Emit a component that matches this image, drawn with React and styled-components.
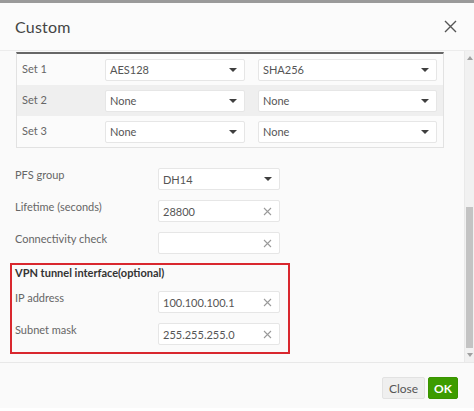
import React from "react";
import styled, { createGlobalStyle } from "styled-components";

const Global = createGlobalStyle`
  html, body { margin: 0; padding: 0; background: #ffffff; }
  body { font-family: Lato, "Noto Sans", "Liberation Sans", sans-serif; }
  * { box-sizing: border-box; }
`;

const Dialog = styled.div`
  width: 474px;
  height: 408px;
  background: #fafafa;
  border-top: 3px solid #9a9a9a;
  display: flex;
  flex-direction: column;
  overflow: hidden;
`;

const Header = styled.div`
  height: 48px;
  flex: none;
  display: flex;
  align-items: center;
  justify-content: space-between;
  padding: 0 17px 0 15px;
  background: #fbfbfb;
  border-bottom: 1px solid #ececec;
`;

const Title = styled.div`
  font-size: 16px;
  color: #444;
  letter-spacing: 0.2px;
  padding-bottom: 1px;
`;

const IconButton = styled.div`
  width: 14px;
  height: 14px;
  display: flex;
  align-items: center;
  justify-content: center;
`;

const Body = styled.div`
  flex: 1;
  display: flex;
  min-height: 0;
`;

const Content = styled.div`
  flex: 1;
  overflow: hidden;
  padding: 1px 20px 0 15px;
  display: flex;
  flex-direction: column;
`;

const Scrollbar = styled.div`
  width: 10px;
  flex: none;
  background: #f1f1f1;
  border-left: 1px solid #e9e9e9;
  display: flex;
  flex-direction: column;
`;

const ScrollArrow = styled.div`
  height: 14px;
  flex: none;
  display: flex;
  align-items: center;
  justify-content: center;
`;

const ScrollTrack = styled.div`
  flex: 1;
  display: flex;
  flex-direction: column;
  justify-content: flex-end;
  padding: 0 1px;
`;

const Thumb = styled.div`
  height: 141px;
  background: #c3c3c3;
`;

const Table = styled.div`
  margin-left: 1px;
  width: 428px;
  border-top: 2px solid #676767;
  border-left: 1px solid #e2e2e2;
  border-right: 1px solid #e2e2e2;
  border-bottom: 1px solid #e2e2e2;
  background: #fbfbfb;
`;

const TableRow = styled.div`
  height: 31px;
  display: grid;
  grid-template-columns: 70px 140px 179px;
  column-gap: 13px;
  align-items: center;
  padding: 0 6px 0 5px;
  background: ${(p) => (p.$shaded ? "#efefef" : "transparent")};
`;

const CellLabel = styled.div`
  font-size: 11px;
  color: #666;
  padding-bottom: 2px;
`;

const Field = styled.div`
  height: 22px;
  width: ${(p) => p.$w || "100%"};
  background: #ffffff;
  border: 1px solid #e6e6e6;
  border-radius: 2px;
  display: flex;
  align-items: center;
  justify-content: space-between;
  padding: 0 7px 0 4px;
  font-size: 11px;
  color: #555;
`;

const Caret = styled.span`
  width: 0;
  height: 0;
  border-left: 4px solid transparent;
  border-right: 4px solid transparent;
  border-top: 4px solid #3f3f3f;
`;

const FormArea = styled.div`
  margin-top: 20px;
  display: flex;
  flex-direction: column;
  gap: 10px;
`;

const FormRow = styled.div`
  display: flex;
  align-items: flex-start;
`;

const FieldLabel = styled.div`
  width: 143px;
  flex: none;
  font-size: 11px;
  color: #666;
`;

const Highlight = styled.div`
  margin-left: -5px;
  margin-top: -1px;
  width: 280px;
  border: 2px solid #d9272e;
  padding: 1px 8px 7px 3px;
  display: flex;
  flex-direction: column;
  gap: 10px;
`;

const SectionTitle = styled.div`
  font-size: 11px;
  font-weight: 700;
  color: #333;
  margin-bottom: 2px;
`;

const Footer = styled.div`
  height: 46px;
  flex: none;
  border-top: 1px solid #e8e8e8;
  background: #fafafa;
  display: flex;
  justify-content: flex-end;
  align-items: flex-start;
  padding: 14px 16px 0 0;
  gap: 3px;
`;

const Button = styled.div`
  height: 22px;
  padding: 0 ${(p) => (p.$primary ? "5px" : "6px")};
  display: flex;
  align-items: center;
  font-size: 12px;
  font-weight: ${(p) => (p.$primary ? 700 : 400)};
  color: ${(p) => (p.$primary ? "#ffffff" : "#555")};
  background: ${(p) => (p.$primary ? "#3d9c00" : "#efefef")};
  border: 1px solid ${(p) => (p.$primary ? "#3a9400" : "#e2e2e2")};
  border-radius: 2px;
`;

const CloseIcon = () => (
  <svg width="13" height="13" viewBox="0 0 13 13">
    <path d="M1 1L12 12M12 1L1 12" stroke="#555" strokeWidth="1.4" />
  </svg>
);

const ClearIcon = () => (
  <svg width="9" height="9" viewBox="0 0 9 9">
    <path d="M1 1L8 8M8 1L1 8" stroke="#9a9a9a" strokeWidth="1.1" />
  </svg>
);

const Tri = ({ up }) => (
  <svg width="6" height="4" viewBox="0 0 6 4">
    <path d={up ? "M0 4L3 0L6 4Z" : "M0 0L3 4L6 0Z"} fill="#a0a0a0" />
  </svg>
);

const Select = ({ value, w }) => (
  <Field $w={w}>
    <span>{value}</span>
    <Caret />
  </Field>
);

const TextInput = ({ value, w }) => (
  <Field $w={w}>
    <span>{value}</span>
    <ClearIcon />
  </Field>
);

const sets = [
  ["Set 1", "AES128", "SHA256"],
  ["Set 2", "None", "None"],
  ["Set 3", "None", "None"],
];

export default function App() {
  return (
    <>
      <Global />
      <Dialog>
        <Header>
          <Title>Custom</Title>
          <IconButton>
            <CloseIcon />
          </IconButton>
        </Header>
        <Body>
          <Content>
            <Table>
              {sets.map(([label, a, b], i) => (
                <TableRow key={label} $shaded={i === 1}>
                  <CellLabel>{label}</CellLabel>
                  <Select value={a} />
                  <Select value={b} />
                </TableRow>
              ))}
            </Table>
            <FormArea>
              <FormRow>
                <FieldLabel>PFS group</FieldLabel>
                <Select value="DH14" w="122px" />
              </FormRow>
              <FormRow>
                <FieldLabel>Lifetime (seconds)</FieldLabel>
                <TextInput value="28800" w="122px" />
              </FormRow>
              <FormRow>
                <FieldLabel>Connectivity check</FieldLabel>
                <TextInput value="" w="122px" />
              </FormRow>
              <Highlight>
                <SectionTitle>VPN tunnel interface(optional)</SectionTitle>
                <FormRow>
                  <FieldLabel>IP address</FieldLabel>
                  <TextInput value="100.100.100.1" w="122px" />
                </FormRow>
                <FormRow>
                  <FieldLabel>Subnet mask</FieldLabel>
                  <TextInput value="255.255.255.0" w="122px" />
                </FormRow>
              </Highlight>
            </FormArea>
          </Content>
          <Scrollbar>
            <ScrollArrow>
              <Tri up />
            </ScrollArrow>
            <ScrollTrack>
              <Thumb />
            </ScrollTrack>
            <ScrollArrow>
              <Tri />
            </ScrollArrow>
          </Scrollbar>
        </Body>
        <Footer>
          <Button>Close</Button>
          <Button $primary>OK</Button>
        </Footer>
      </Dialog>
    </>
  );
}
